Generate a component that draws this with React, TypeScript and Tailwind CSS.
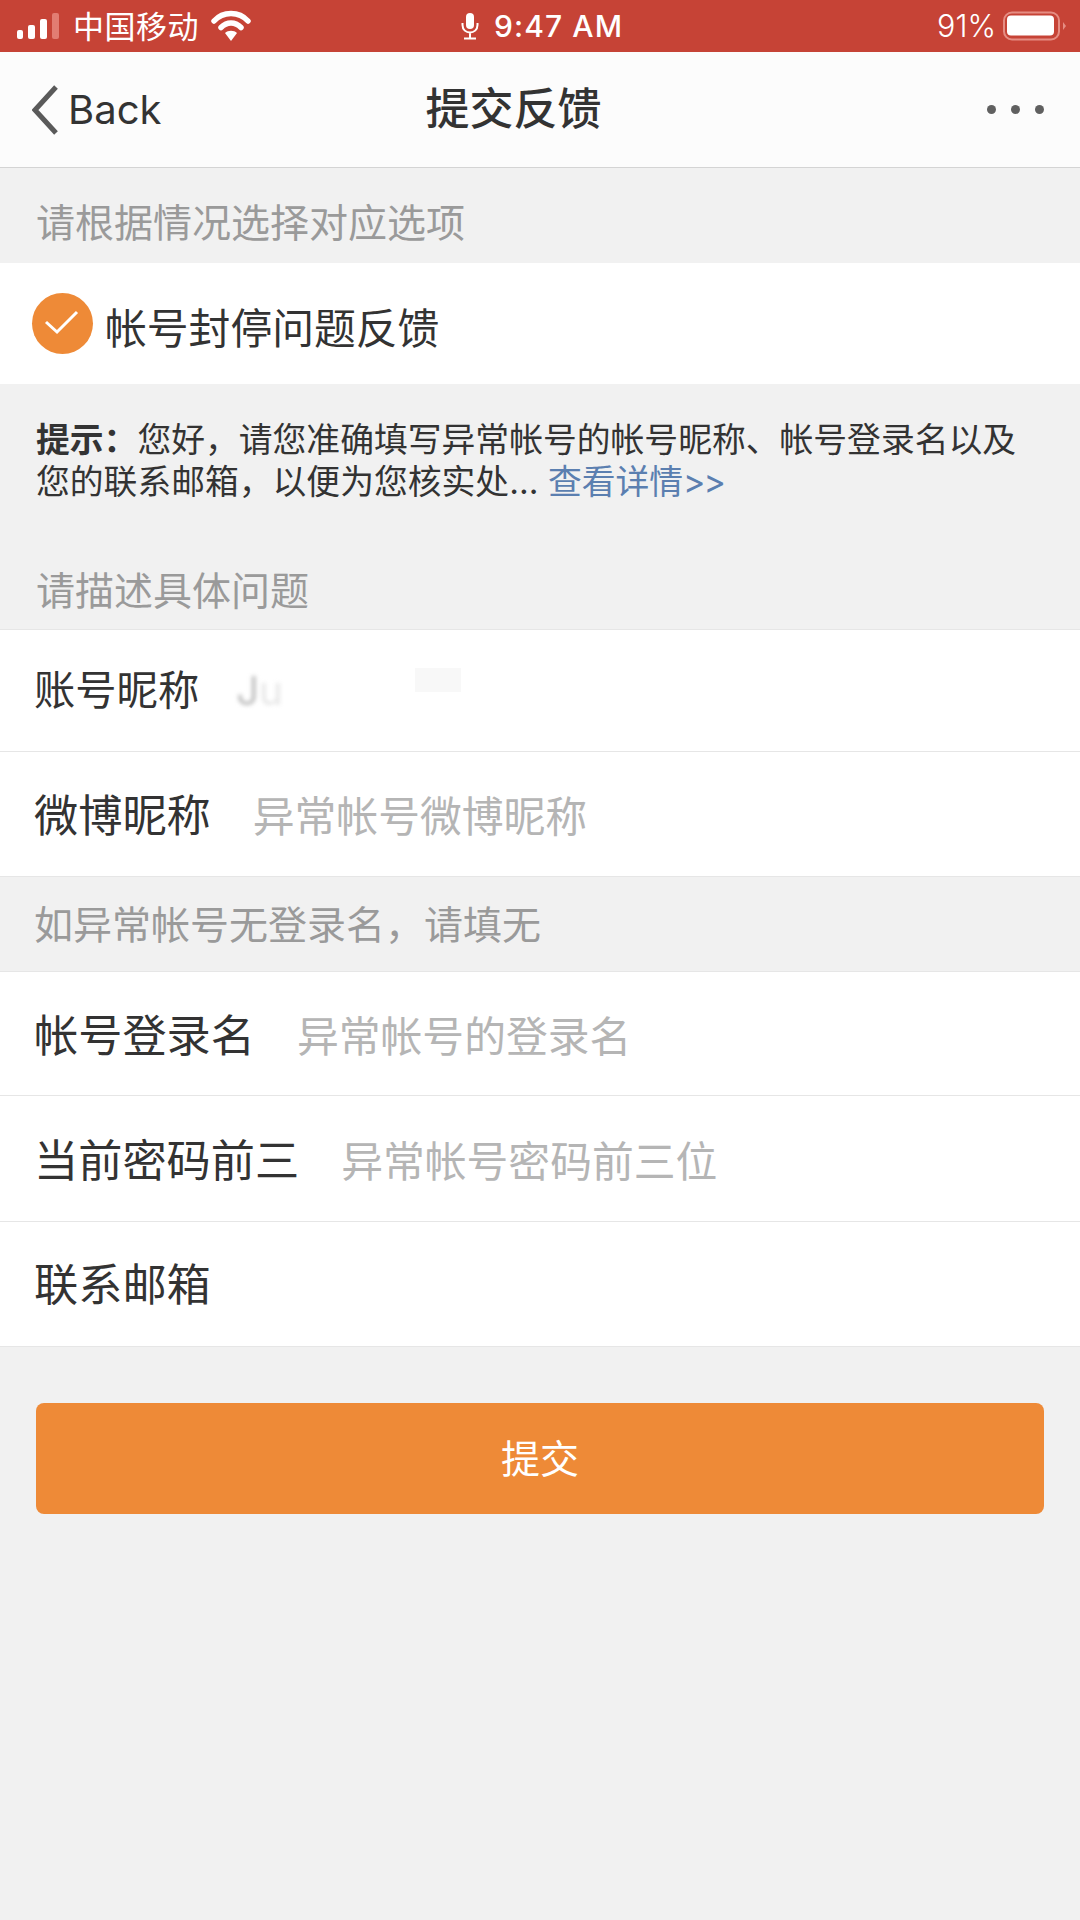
import type { ReactNode } from 'react';

const cjk = "font-['Inter','Noto_Sans_CJK_SC',sans-serif]";

function SectionLabel({ children, className }: { children: ReactNode; className: string }) {
  return <div className={`flex items-center text-[#9a9a9a] ${className}`}>{children}</div>;
}

function FormRow({
  label,
  placeholder,
  height,
  labelSize = 'text-[44.2px]',
  border = true,
  children,
}: {
  label: string;
  placeholder?: string;
  height: string;
  labelSize?: string;
  border?: boolean;
  children?: ReactNode;
}) {
  return (
    <div className={`flex items-center gap-[42px] bg-white pl-[34px] ${height} ${border ? 'border-b border-[#e6e6e6]' : ''}`}>
      <span className={`${labelSize} leading-none text-[#333333]`}>{label}</span>
      {placeholder && <span className="pt-[3px] text-[41.8px] leading-none text-[#b5b5b5]">{placeholder}</span>}
      {children}
    </div>
  );
}

export default function App() {
  return (
    <div className={`flex h-[1920px] w-[1080px] flex-col overflow-hidden bg-[#f1f1f1] ${cjk}`}>
      {/* Status bar */}
      <div className="relative flex h-[52px] items-center bg-[#c64336] text-white">
        <div className="flex items-center pl-[14px]">
          <svg width="48" height="30" viewBox="0 0 48 30">
            <rect x="3" y="19" width="6" height="9" rx="2" fill="#fff" />
            <rect x="14" y="14" width="7" height="14" rx="2" fill="#fff" />
            <rect x="26" y="8" width="7" height="20" rx="2" fill="#fff" />
            <rect x="38" y="2" width="7" height="26" rx="2" fill="#e27d72" />
          </svg>
          <span className="ml-[11px] text-[31px] leading-none tracking-[0.5px]">中国移动</span>
          <svg className="ml-[12px]" width="40" height="32" viewBox="0 0 40 32">
            <path d="M3 11 C12 1 28 1 37 11" fill="none" stroke="#fff" strokeWidth="5.5" strokeLinecap="round" />
            <path d="M10 17.5 C16 11.5 24 11.5 30 17.5" fill="none" stroke="#fff" strokeWidth="5.5" strokeLinecap="round" />
            <path d="M14 23 C17 20 23 20 26 23 L20 31 Z" fill="#fff" />
          </svg>
        </div>
        <div className="absolute left-[460px] top-0 flex h-[52px] items-center">
          <svg width="20" height="30" viewBox="0 0 20 30">
            <rect x="6" y="2" width="8" height="16" rx="4" fill="#fff" />
            <path d="M2.5 12 V14 C2.5 24 17.5 24 17.5 14 V12 M10 22 V27 M4 27.5 H16" fill="none" stroke="#fff" strokeWidth="2" />
          </svg>
          <span className="ml-[14px] text-[30px] font-medium leading-none tracking-[1.1px]">9:47 AM</span>
        </div>
        <div className="ml-auto flex items-center pr-[12px]">
          <span className="text-[30.5px] font-light leading-none">91%</span>
          <svg className="ml-[6px]" width="66" height="30" viewBox="0 0 66 30">
            <rect x="2" y="1.5" width="55" height="27" rx="8" fill="none" stroke="#e58d83" strokeWidth="2" />
            <rect x="5" y="4.5" width="47" height="20" rx="4" fill="#fff" />
            <path d="M61 11 L64 15 L61 19 Z" fill="#e58d83" />
          </svg>
        </div>
      </div>

      {/* Nav bar */}
      <div className="relative flex h-[116px] items-center border-b border-[#d4d4d4] bg-[#fcfcfc]">
        <svg className="ml-[32px]" width="26" height="52" viewBox="0 0 26 52">
          <path d="M24 3 L3 26 L24 49" fill="none" stroke="#5a5a5a" strokeWidth="5" />
        </svg>
        <span className="ml-[10px] text-[40px] leading-none text-[#333333]">Back</span>
        <span className="absolute left-0 right-[53px] top-[27px] text-center text-[44px] font-medium leading-[60px] text-[#333333]">
          提交反馈
        </span>
        <div className="ml-auto flex gap-[15px] pr-[36px]">
          <span className="h-[9px] w-[9px] rounded-full bg-[#606060]" />
          <span className="h-[9px] w-[9px] rounded-full bg-[#606060]" />
          <span className="h-[9px] w-[9px] rounded-full bg-[#606060]" />
        </div>
      </div>

      <SectionLabel className="h-[95px] pl-[36px] pt-[14px] text-[39px] leading-none">请根据情况选择对应选项</SectionLabel>

      {/* Selected option */}
      <div className="flex h-[121px] items-center gap-[12px] bg-white pl-[32px]">
        <span className="flex h-[61px] w-[61px] items-center justify-center rounded-full bg-[#ee8a37]">
          <svg className="-ml-[1px] -mt-[2px]" width="36" height="28" viewBox="0 0 36 28">
            <path d="M2 13 L13 23 L33 3" fill="none" stroke="#fff" strokeWidth="3" />
          </svg>
        </span>
        <span className="pt-[12px] text-[41.8px] leading-none text-[#333333]">帐号封停问题反馈</span>
      </div>

      {/* Tip */}
      <div className="h-[150px] pl-[36px] pt-[35px] text-[33.8px] leading-[42px] text-[#333333]">
        <div>
          <b className="font-bold">提示：</b>您好，请您准确填写异常帐号的帐号昵称、帐号登录名以及
        </div>
        <div>
          您的联系邮箱，以便为您核实处... <span className="text-[#5b7fb0]">查看详情<span className="tracking-[-2px]">&gt;&gt;</span></span>
        </div>
      </div>

      <SectionLabel className="h-[95px] pl-[36px] pt-[18px] text-[39px] leading-none">请描述具体问题</SectionLabel>

      <FormRow label="账号昵称" labelSize="text-[41.3px]" height="h-[123px] pt-[1px] border-t border-t-[#e6e6e6]">
        <div className="relative -ml-[5px] flex h-[60px] w-[225px] items-center">
          <span className="text-[40px] leading-none text-[#bdbdbd] blur-[2px]">J<span className="text-[#e6e6e6]">u</span></span>
          <span className="absolute right-0 top-[7px] h-[24px] w-[46px] bg-[#f8f8f8]" />
        </div>
      </FormRow>
      <FormRow label="微博昵称" placeholder="异常帐号微博昵称" height="h-[124px] pt-[5px]" border={false} />

      <SectionLabel className="h-[95px] border-t border-[#e6e6e6] pl-[34px] text-[39px] leading-none">如异常帐号无登录名，请填无</SectionLabel>

      <FormRow label="帐号登录名" placeholder="异常帐号的登录名" height="h-[125px] pt-[5px] border-t border-t-[#e6e6e6]" />
      <FormRow label="当前密码前三" placeholder="异常帐号密码前三位" height="h-[126px] pt-[5px]" />
      <FormRow label="联系邮箱" height="h-[125px] pt-[3px]" />

      {/* Submit */}
      <div className="px-[36px] pt-[56px]">
        <button className="flex h-[111px] w-full items-center justify-center rounded-[8px] bg-[#ee8a37] text-[39px] leading-none text-white">
          提交
        </button>
      </div>
    </div>
  );
}
